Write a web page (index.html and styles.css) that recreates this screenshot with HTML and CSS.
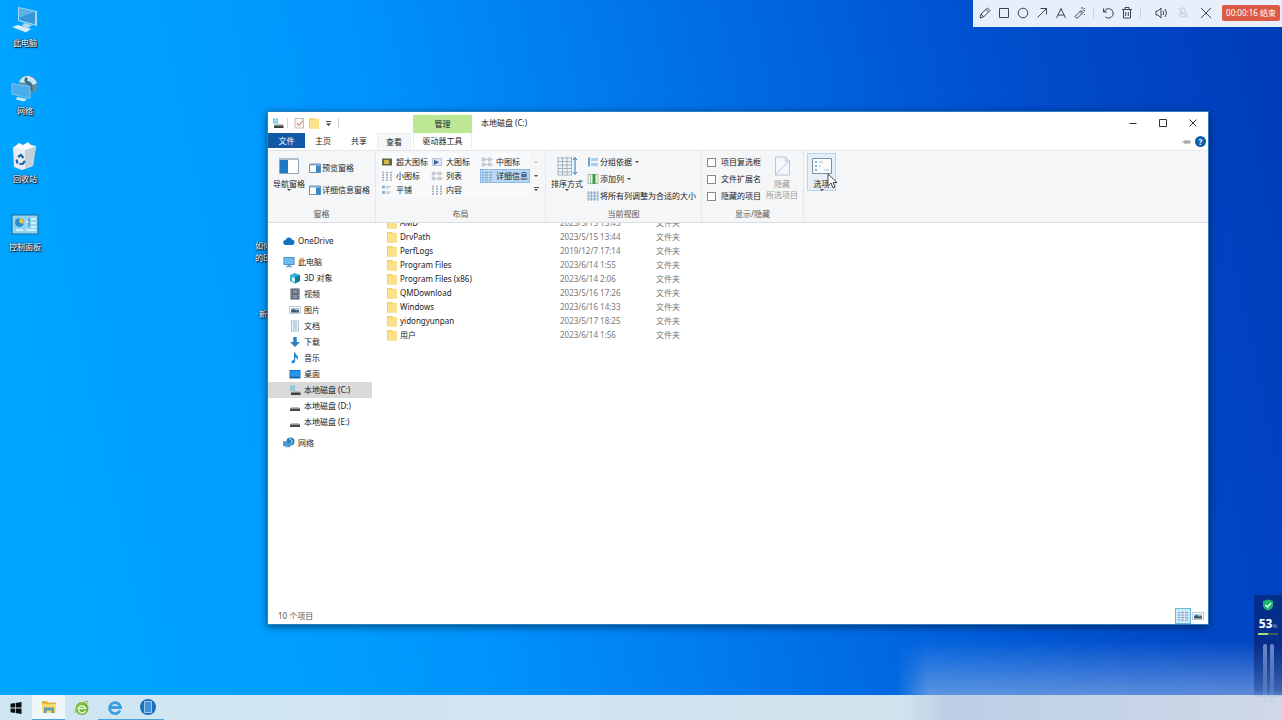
FILE: index.html
```html
<!DOCTYPE html>
<html lang="zh-CN">
<head>
  <meta charset="UTF-8" />
  <meta name="viewport" content="width=device-width, initial-scale=1" />
  <title>本地磁盘 (C:)</title>
  <link rel="stylesheet" href="styles.css">
</head>
<body>

  <!-- shared icons -->
  <svg class="sprite" aria-hidden="true">
    <symbol id="i-folder" viewBox="0 0 12 12">
      <path d="M1 1h5l1 1h4v9.500H1z" fill="#f2cf6b"/>
      <path d="M2 2.500h9v9H2z" fill="#fde08a"/>
    </symbol>
    <symbol id="i-drive" viewBox="0 0 12 12">
      <path d="M2.500 7h7l1.500 1.500H1z" fill="#b9bcbf"/>
      <path d="M1 8.500h10V11H1z" fill="#45494d"/>
    </symbol>
    <symbol id="i-drive-c" viewBox="0 0 12 12">
      <path d="M1 1.500h2.300v2.200H1zM3.800 1.500h2.300v2.200H3.800zM1 4.200h2.300v2.200H1zM3.800 4.200h2.300v2.200H3.800z" fill="#6fc4dd"/>
      <path d="M3 7h7l1.500 1.500H2z" fill="#b9bcbf"/>
      <path d="M2 8.500h9.500V11H2z" fill="#3b4146"/>
    </symbol>
    <symbol id="i-pc" viewBox="0 0 12 12">
      <path d="M.5 1h11v8H.5z" fill="#3b86bd"/>
      <path d="M1.300 1.800h9.400v6.400H1.300z" fill="#6dbbf0"/>
      <path d="M4.500 9h3v1.300h2v.9h-7v-.9h2z" fill="#6fa3c4"/>
    </symbol>
    <symbol id="i-net" viewBox="0 0 12 12">
      <circle cx="7.500" cy="4.500" r="4" fill="#2f7fb5"/>
      <path d="M6 1.500q3 1 3 3t-1.500 3" stroke="#bfe6f5" fill="none"/>
      <path d="M.5 4.500l6.500.8v4.500L.5 8.800z" fill="#3f9bdc" stroke="#2371ad" stroke-width=".5"/>
      <path d="M2 10l4 .6v.9l-4-.7z" fill="#b9d8e8"/>
    </symbol>
    <symbol id="i-pane" viewBox="0 0 12 12">
      <path d="M.5 2h11v8.500H.5z" fill="#fff" stroke="#6b8fae"/>
      <path d="M.5 2h11v1.500H.5z" fill="#7ba7cc"/>
      <path d="M7 3.500h4.500v7H7z" fill="#3b86c8"/>
    </symbol>
    <symbol id="i-grid" viewBox="0 0 12 12">
      <path d="M1 2h3v3H1zM7 2h3v3H7zM1 7h3v3H1zM7 7h3v3H7z" fill="#d3d8de" stroke="#a3acb6" stroke-width=".5"/>
      <path d="M4.800 3.500h1.500M4.800 8.500h1.500M10.500 3.500h1M10.500 8.500h1" stroke="#a3acb6"/>
    </symbol>
    <symbol id="i-small" viewBox="0 0 12 12">
      <path d="M1 2.500h2M5 2.500h2M9 2.500h2M1 5h2M5 5h2M9 5h2M1 7.500h2M5 7.500h2M9 7.500h2M1 10h2M5 10h2M9 10h2" stroke="#a3acb6" stroke-width="1.500"/>
    </symbol>
    <symbol id="i-lines" viewBox="0 0 12 12">
      <path d="M1 2.500h2M1 5h2M1 7.500h2M1 10h2" stroke="#5f9bd1"/>
      <path d="M4 2.500h3M8 2.500h3M4 5h3M8 5h3M4 7.500h3M8 7.500h3M4 10h3M8 10h3" stroke="#8e99a6"/>
    </symbol>
    <symbol id="i-tiles" viewBox="0 0 12 12">
      <path d="M1 1.500h3v3H1zM1 7h3v3H1z" fill="#8fb4d2"/>
      <path d="M5 2.500h5M5 4h3M5 8h5M5 9.500h3" stroke="#a3acb6" stroke-width=".8"/>
    </symbol>
    <symbol id="i-photo" viewBox="0 0 12 12">
      <path d="M.5 2.500h11v7H.5z" fill="#fff" stroke="#a5b1bd" stroke-width=".7"/>
      <path d="M2 4h8v4.500H2z" fill="#9fc8e6"/>
      <path d="M2 8.500V6l3-1 2 1.500 3-.5v2.500z" fill="#40586b"/>
    </symbol>
    <symbol id="i-doc" viewBox="0 0 12 12">
      <path d="M2.500.8h7v10.400h-7z" fill="#f4f9fc" stroke="#8ba3b5" stroke-width=".7"/>
      <path d="M4 3h4M4 5h4M4 7h4M4 9h4" stroke="#6c9dbd" stroke-width=".8"/>
    </symbol>
    <symbol id="i-table" viewBox="0 0 12 12">
      <path d="M1 1h10v10H1z" fill="#edf3f8"/>
      <path d="M1 1v10M4.300 1v10M7.600 1v10M11 1v10M1 3h10M1 6h10M1 9h10" stroke="#7d9cb5" stroke-width=".8"/>
    </symbol>
  </svg>

  <main class="desktop">
    <nav class="shortcuts" aria-label="桌面">
      <a class="shortcut" href="#">
        <svg viewBox="0 0 28 28"><path d="M7 1l19 4v15L7 15z" fill="#a9d8f2"/><path d="M8 2.300l16 3.500v12.500L8 14z" fill="#3596da"/><path d="M8 2.300l16 3.500L8 12z" fill="#5cb2e8"/><path d="M13 17l8 2-4 3-6-2z" fill="#b8d6e6"/><path d="M1 21l6-2 13 4-5 3.500z" fill="#d9ebf4"/></svg>
        <span>此电脑</span>
      </a>
      <a class="shortcut" href="#">
        <svg viewBox="0 0 28 28"><circle cx="17" cy="11" r="9.500" fill="#5c8ea8"/><path d="M8 8q3-7 10-6 6 2 8 7l-4 2q-1-3-4-4-4 0-4 2z" fill="#c9ebf7"/><path d="M16 4q-3 3 1 5t3 8" stroke="#3d6d8c" stroke-width="3" fill="none"/><path d="M1 9.500l18 3v12L1 20z" fill="#4badea" stroke="#7cc4ee"/><path d="M6 23l10 2-3 2.500-8-2z" fill="#cfeaf6"/></svg>
        <span>网络</span>
      </a>
      <a class="shortcut" href="#">
        <svg viewBox="0 0 28 28"><path d="M2 5l23-1-3 20-11 4-8-3z" fill="#e7edf2"/><path d="M14 8l11-4-3 20-8 3z" fill="#c3d0da"/><path d="M3 5l5-4 4 2 5-3 3 3 5 1-11 4z" fill="#fafcfd"/><path d="M7 15l3-2 2.500 3M14 19l-2.500 3h-3M5.500 17.500l1 4" stroke="#1c66aa" stroke-width="2.200" fill="none"/></svg>
        <span>回收站</span>
      </a>
      <a class="shortcut" href="#">
        <svg viewBox="0 0 28 28"><path d="M1 5h26v19H1z" fill="#8ed4f3" stroke="#1b6a9c"/><circle cx="8.500" cy="12.500" r="4.500" fill="#2b8fc4"/><path d="M8.500 12.500V8a4.500 4.500 0 0 1 4 6z" fill="#f6c64a"/><path d="M5 20h7M15 12h3M20 9h5M20 13h5M20 17h5M15 20h10" stroke="#e9f8ff" stroke-width="1.500"/><path d="M18 8v9" stroke="#287eb0"/></svg>
        <span>控制面板</span>
      </a>
    </nav>

    <div class="covered">
      <span>如何</span>
      <span>的BD</span>
      <span>新建</span>
    </div>

    <div class="haze"></div>

    <section class="window">
      <header class="titlebar">
        <div class="quick">
          <svg class="icon"><use href="#i-drive-c"/></svg>
          <i class="bar"></i>
          <button type="button" aria-label="属性"><svg class="icon" viewBox="0 0 12 12"><path d="M2 1.500h8.500v9.500H2z" fill="#fbf7f5" stroke="#b9a6a0" stroke-width=".8"/><path d="M4 6l2 2.500L9.500 4" stroke="#d0614f" fill="none"/></svg></button>
          <button type="button" aria-label="新建文件夹"><svg class="icon"><use href="#i-folder"/></svg></button>
          <button type="button" aria-label="自定义快速访问工具栏"><svg class="icon" viewBox="0 0 12 12"><path d="M3 4.500h5" stroke="#444"/><path d="M3 6.500h5L5.500 9z" fill="#333"/></svg></button>
          <i class="bar"></i>
        </div>
        <span class="context">管理</span>
        <h1 class="caption">本地磁盘 (C:)</h1>
        <div class="controls">
          <button type="button" aria-label="最小化"><svg viewBox="0 0 10 10"><path d="M1.500 5.500h7"/></svg></button>
          <button type="button" aria-label="最大化"><svg viewBox="0 0 10 10"><path d="M1.500 1.500h7v7h-7z"/></svg></button>
          <button type="button" aria-label="关闭"><svg viewBox="0 0 10 10"><path d="M1.500 1.500l7 7M8.500 1.500l-7 7"/></svg></button>
        </div>
      </header>

      <div class="tabs">
        <button type="button" class="tab file">文件</button>
        <button type="button" class="tab">主页</button>
        <button type="button" class="tab">共享</button>
        <button type="button" class="tab active">查看</button>
        <button type="button" class="tab tools">驱动器工具</button>
        <div class="tabs-end">
          <button type="button" aria-label="折叠功能区"><svg class="icon" viewBox="0 0 12 12"><path d="M2 6h3M5 4v4M5 5h5v2H5" stroke="#999" fill="#bbb"/></svg></button>
          <button type="button" class="help" aria-label="帮助">?</button>
        </div>
      </div>

      <div class="ribbon">
        <section class="group panes">
          <div class="group-body">
            <button type="button" class="big">
              <svg viewBox="0 0 22 20"><path d="M1.500 2.500h19v15h-19z" fill="#fff" stroke="#8ea4b8"/><path d="M1 2h20v2H1z" fill="#aebfce"/><path d="M2 4h8v13H2z" fill="#1f78c8"/></svg>
              <span>导航窗格</span>
              <i class="arrow"></i>
            </button>
            <div class="stack wide">
              <button type="button" class="small"><svg class="icon"><use href="#i-pane"/></svg>预览窗格</button>
              <button type="button" class="small"><svg class="icon"><use href="#i-pane"/></svg>详细信息窗格</button>
            </div>
          </div>
          <h2>窗格</h2>
        </section>

        <section class="group layout">
          <div class="group-body">
            <div class="gallery">
              <button type="button"><svg class="icon" viewBox="0 0 12 12"><path d="M1 2.500h10v7H1z" fill="#5a6b45"/><path d="M3 4h5v4H3z" fill="#d6b94c"/></svg>超大图标</button>
              <button type="button"><svg class="icon" viewBox="0 0 12 12"><path d="M1.500 2.500h9v7h-9z" fill="#dce9f4" stroke="#93a5b5" stroke-width=".6"/><path d="M3 4l5 2-5 3z" fill="#265f9c"/></svg>大图标</button>
              <button type="button"><svg class="icon"><use href="#i-grid"/></svg>中图标</button>
              <button type="button"><svg class="icon"><use href="#i-small"/></svg>小图标</button>
              <button type="button"><svg class="icon"><use href="#i-grid"/></svg>列表</button>
              <button type="button" class="selected"><svg class="icon"><use href="#i-lines"/></svg>详细信息</button>
              <button type="button"><svg class="icon"><use href="#i-tiles"/></svg>平铺</button>
              <button type="button"><svg class="icon"><use href="#i-small"/></svg>内容</button>
            </div>
            <div class="spinner">
              <button type="button" class="off" aria-label="上一行"><i class="arrow up"></i></button>
              <button type="button" aria-label="下一行"><i class="arrow"></i></button>
              <button type="button" aria-label="更多"><i class="arrow more"></i></button>
            </div>
          </div>
          <h2>布局</h2>
        </section>

        <section class="group view">
          <div class="group-body">
            <button type="button" class="big">
              <svg viewBox="0 0 22 20"><path d="M2 1h14v18H2z" fill="#f3f6f9"/><path d="M2 1v18M6.500 1v18M11 1v18M15.500 1v18M2 2h14M2 5.500h14M2 9h14M2 12.500h14M2 16h14M2 19h14" stroke="#a2b2c0"/><path d="M19 2v15M17 4l2-2.500L21 4M17 16l2 2.500 2-2.500" stroke="#2b74b5" fill="none"/></svg>
              <span>排序方式</span>
              <i class="arrow"></i>
            </button>
            <div class="stack">
              <button type="button" class="small"><svg class="icon" viewBox="0 0 12 12"><path d="M1 1.500h2v9H1z" fill="#5ea9dc"/><path d="M4 2h7v3H4zM4 7h7v3H4z" fill="#a9d1ee"/></svg>分组依据<i class="arrow"></i></button>
              <button type="button" class="small"><svg class="icon" viewBox="0 0 12 12"><path d="M1 1.500h10v9H1z" fill="#eef5ee" stroke="#8fae94" stroke-width=".7"/><path d="M5.500 1h3v10h-3z" fill="#3b9e4a"/><path d="M3.500 1v10" stroke="#8fae94" stroke-width=".7"/></svg>添加列<i class="arrow"></i></button>
              <button type="button" class="small"><svg class="icon"><use href="#i-table"/></svg>将所有列调整为合适的大小</button>
            </div>
          </div>
          <h2>当前视图</h2>
        </section>

        <section class="group show">
          <div class="group-body">
            <div class="stack">
              <label class="check"><input type="checkbox">项目复选框</label>
              <label class="check"><input type="checkbox">文件扩展名</label>
              <label class="check"><input type="checkbox">隐藏的项目</label>
            </div>
            <button type="button" class="big faded" disabled>
              <svg viewBox="0 0 22 20"><path d="M4.500 1h10l4 4v14h-14z" fill="#f4f7fb" stroke="#b8c6d6"/><path d="M14.500 1v4h4M5 18L18 5" stroke="#b8c6d6" fill="none"/></svg>
              <span>隐藏<br>所选项目</span>
            </button>
          </div>
          <h2>显示/隐藏</h2>
        </section>

        <section class="group options">
          <div class="group-body">
            <button type="button" class="big hover">
              <svg viewBox="0 0 22 20"><path d="M1.500 2.500h19v15h-19z" fill="#fbfcfd" stroke="#7f8d9a"/><path d="M4 6h2M4 10h2M4 14h2" stroke="#5594c8" stroke-width="1.500"/><path d="M8 6h4M8 10h2M13 14h5" stroke="#b4bec8"/></svg>
              <span>选项</span>
              <i class="arrow"></i>
            </button>
            <svg class="cursor" viewBox="0 0 11 16"><path d="M1 1v12l3-3 2 5 2-1-2-4.500h4z" fill="#fff" stroke="#333" stroke-width=".9"/></svg>
          </div>
        </section>
      </div>

      <div class="content">
        <nav class="tree" aria-label="导航窗格">
          <a href="#" class="root"><svg class="icon" viewBox="0 0 12 12"><path d="M3 10a2.500 2.500 0 0 1-.5-5A3.500 3.500 0 0 1 9 4.500 2.800 2.800 0 0 1 9.500 10z" fill="#1473c4"/></svg>OneDrive</a>
          <a href="#" class="root"><svg class="icon"><use href="#i-pc"/></svg>此电脑</a>
          <a href="#"><svg class="icon" viewBox="0 0 12 12"><path d="M6 1l5 2v6l-5 2.500L1 9V3z" fill="#31b5d8"/><path d="M6 5l5-2v6l-5 2.500z" fill="#15799f"/><path d="M3 5l3 1v4L3 9z" fill="#d6f4fb"/></svg>3D 对象</a>
          <a href="#"><svg class="icon" viewBox="0 0 12 12"><path d="M1.500.5h9v11h-9z" fill="#4b4f5c"/><path d="M3.500 1.500h5v4h-5zM3.500 6.500h5v4h-5z" fill="#8492a6"/><path d="M2.400 1v10M9.600 1v10" stroke="#ddd" stroke-width=".7" stroke-dasharray="1 1"/></svg>视频</a>
          <a href="#"><svg class="icon"><use href="#i-photo"/></svg>图片</a>
          <a href="#"><svg class="icon"><use href="#i-doc"/></svg>文档</a>
          <a href="#"><svg class="icon" viewBox="0 0 12 12"><path d="M4.300 1h3.400v5h3.300l-5 5-5-5h3.300z" fill="#2a80c8"/></svg>下载</a>
          <a href="#"><svg class="icon" viewBox="0 0 12 12"><path d="M5 .5h1.200q.3 2 2 3.200 1.800 1.800.3 4.300-.2-2-2.300-2.800v3.800q-.4 2.200-2.400 2.300T2.500 9.500Q3 8 5 8z" fill="#1f87cf"/></svg>音乐</a>
          <a href="#"><svg class="icon" viewBox="0 0 12 12"><path d="M.5 2h11v8.500H.5z" fill="#1668b0"/><path d="M1.300 2.800h9.400v5.700H1.300z" fill="#2596ea"/></svg>桌面</a>
          <a href="#" class="current"><svg class="icon"><use href="#i-drive-c"/></svg>本地磁盘 (C:)</a>
          <a href="#"><svg class="icon"><use href="#i-drive"/></svg>本地磁盘 (D:)</a>
          <a href="#"><svg class="icon"><use href="#i-drive"/></svg>本地磁盘 (E:)</a>
          <a href="#" class="root"><svg class="icon"><use href="#i-net"/></svg>网络</a>
        </nav>

        <div class="files">
          <table>
            <tbody>
              <tr><td><svg class="icon"><use href="#i-folder"/></svg>AMD</td><td>2023/5/15 13:43</td><td>文件夹</td></tr>
              <tr><td><svg class="icon"><use href="#i-folder"/></svg>DrvPath</td><td>2023/5/15 13:44</td><td>文件夹</td></tr>
              <tr><td><svg class="icon"><use href="#i-folder"/></svg>PerfLogs</td><td>2019/12/7 17:14</td><td>文件夹</td></tr>
              <tr><td><svg class="icon"><use href="#i-folder"/></svg>Program Files</td><td>2023/6/14 1:55</td><td>文件夹</td></tr>
              <tr><td><svg class="icon"><use href="#i-folder"/></svg>Program Files (x86)</td><td>2023/6/14 2:06</td><td>文件夹</td></tr>
              <tr><td><svg class="icon"><use href="#i-folder"/></svg>QMDownload</td><td>2023/5/16 17:26</td><td>文件夹</td></tr>
              <tr><td><svg class="icon"><use href="#i-folder"/></svg>Windows</td><td>2023/6/16 14:33</td><td>文件夹</td></tr>
              <tr><td><svg class="icon"><use href="#i-folder"/></svg>yidongyunpan</td><td>2023/5/17 18:25</td><td>文件夹</td></tr>
              <tr><td><svg class="icon"><use href="#i-folder"/></svg>用户</td><td>2023/6/14 1:56</td><td>文件夹</td></tr>
            </tbody>
          </table>
        </div>
      </div>

      <footer class="status">
        <span>10 个项目</span>
        <button type="button" class="on" aria-label="详细信息"><svg class="icon"><use href="#i-lines"/></svg></button>
        <button type="button" aria-label="大图标"><svg class="icon"><use href="#i-photo"/></svg></button>
      </footer>
    </section>

    <div class="recorder">
      <button type="button" aria-label="画笔"><svg viewBox="0 0 14 14"><path d="M2 12l1-4 6.500-6 2.500 2.500L5.500 11zM8 3.500L10.500 6M3 8l2.500 3"/></svg></button>
      <button type="button" aria-label="矩形"><svg viewBox="0 0 14 14"><path d="M2.500 2.500h9v9h-9z"/></svg></button>
      <button type="button" aria-label="椭圆"><svg viewBox="0 0 14 14"><circle cx="7" cy="7" r="4.800"/></svg></button>
      <button type="button" aria-label="箭头"><svg viewBox="0 0 14 14"><path d="M2.500 11.500l9-9M5.500 2.500h6v6"/></svg></button>
      <button type="button" aria-label="文字"><svg viewBox="0 0 14 14"><path d="M2.500 12L7 2.500l4.500 9.500M4 9h6"/></svg></button>
      <button type="button" aria-label="荧光笔"><svg viewBox="0 0 14 14"><path d="M2 10.500l6-6 2 2-6 6zM7 5.500l2 2M9 1v2M12 4.500h-1.500M12 2l-1.500 1.200M11 8l.5 1"/></svg></button>
      <i class="bar"></i>
      <button type="button" aria-label="撤销"><svg viewBox="0 0 14 14"><path d="M2.500 2.500v3.500H6M3 6a4.700 4.700 0 1 1 1.500 5"/></svg></button>
      <button type="button" aria-label="清空"><svg viewBox="0 0 14 14"><path d="M2 3.500h10M5 3V1.500h4V3M3.500 4v8h7V4M5.700 6v4M8.300 6v4"/></svg></button>
      <i class="bar"></i>
      <button type="button" class="sound" aria-label="声音"><svg viewBox="0 0 14 14"><path d="M2 5h2l3-3v10L4 9H2zM9 5q1.500 2 0 4M11 3q3 4 0 8"/></svg></button>
      <button type="button" class="muted" aria-label="麦克风"><svg viewBox="0 0 14 14"><path d="M5 2h4v6H5zM3 7q0 4 4 4t4-4M2 2l10 10"/></svg></button>
      <button type="button" aria-label="关闭"><svg viewBox="0 0 14 14"><path d="M2 2l10 10M12 2L2 12"/></svg></button>
      <button type="button" class="stop">00:00:16 结束</button>
    </div>
  </main>

  <footer class="taskbar">
    <button type="button" class="start" aria-label="开始"><svg viewBox="0 0 18 18"><path d="M3.500 4.700L8 4v4.600H3.500zM8.700 3.900l5.800-.9v5.600H8.700zM3.500 9.400H8V14l-4.500-.7zM8.700 9.400h5.800V15l-5.800-.9z" fill="#0b0d10"/></svg></button>
    <button type="button" class="front" aria-label="文件资源管理器"><svg viewBox="0 0 18 18"><path d="M2 3h5l1 1.500h8V15H2z" fill="#e8b33b"/><path d="M2 6h14v9H2z" fill="#fbd86b"/><path d="M4 9.500h10V15h-2.500v-2.500h-5V15H4z" fill="#5f9bae"/></svg></button>
    <button type="button" aria-label="360浏览器"><svg viewBox="0 0 18 18"><circle cx="9" cy="9.500" r="6.500" fill="#6cb52f"/><path d="M12.500 11.500A3.600 3.600 0 1 1 12.600 9.500H6" fill="none" stroke="#e8f6da" stroke-width="1.500"/><path d="M2 14Q3 6 12.500 2.500q3-.8 2 2" fill="none" stroke="#9ad04a" stroke-width="1.300"/></svg></button>
    <button type="button" class="open" aria-label="浏览器"><svg viewBox="0 0 18 18"><path d="M14 12.500A5.500 5.500 0 1 1 14.500 9.500H5" fill="none" stroke="#3a9fe0" stroke-width="2.800"/></svg></button>
    <button type="button" class="open" aria-label="手机助手"><svg viewBox="0 0 18 18"><circle cx="9" cy="9" r="8" fill="#1b6dbd"/><path d="M5.500 3.500h7v11h-7z" fill="#3f93dc" stroke="#a9d0f0" stroke-width=".9"/></svg></button>
  </footer>

  <aside class="monitor">
    <svg class="shield" viewBox="0 0 12 12"><path d="M6 .5l5 1.500v4q0 4-5 5.500Q1 10 1 6V2z" fill="#1cb673"/><path d="M3.500 6l2 2 3.500-4" stroke="#fff" fill="none" stroke-width="1.300"/></svg>
    <strong>53<small>%</small></strong>
    <i class="meter"></i>
    <div class="levels"><i></i><i></i></div>
  </aside>

</body>
</html>
```
FILE: styles.css
```css
* {
  box-sizing: border-box;
}
body {
  margin: 0;
  height: 100vh;
  display: flex;
  flex-direction: column;
  overflow: hidden;
  position: relative;
  font-family: "Noto Sans", "Noto Sans CJK SC", sans-serif;
  font-size: 8px;
  line-height: 12px;
  color: #222;
  background: linear-gradient(78deg, #00a6ff 0%, #009fff 22%, #0092fc 36%, #007ff0 48%, #0066e0 64%, #004ecd 80%, #0042c0 92%, #003cb8 100%);
}
button {
  font: inherit;
  color: inherit;
  background: none;
  border: none;
  padding: 0;
  white-space: nowrap;
}
a {
  color: inherit;
  text-decoration: none;
}
svg {
  display: block;
  flex: none;
}
h1, h2 {
  margin: 0;
  font-size: 8px;
  font-weight: normal;
}
.sprite {
  position: absolute;
  width: 0;
  height: 0;
}
.icon {
  width: 12px;
  height: 12px;
}
.bar {
  width: 1px;
  height: 10px;
  background: #cfd2d8;
}
.arrow {
  border: 2px solid transparent;
  border-top-color: #444;
  border-bottom: none;
}
.arrow.up {
  border-top: none;
  border-bottom: 2px solid #444;
}

/* desktop */
.desktop {
  flex: 1;
  position: relative;
  min-height: 0;
}
.shortcuts {
  display: flex;
  flex-direction: column;
  align-items: flex-start;
  gap: 25px;
  padding: 6px 5px;
}
.shortcut {
  display: flex;
  flex-direction: column;
  align-items: center;
  gap: 3px;
  width: 40px;
  color: #fff;
  text-shadow: 0 0 2px #000, 1px 1px 1px #000;
}
.shortcut svg {
  width: 28px;
  height: 28px;
}
.covered {
  position: absolute;
  left: 255px;
  top: 240px;
  display: flex;
  flex-direction: column;
  color: #fff;
  text-shadow: 0 0 2px #000, 1px 1px 1px #000;
}
.covered span:last-child {
  margin-top: 44px;
  padding-left: 4px;
}
.haze {
  position: absolute;
  left: 896px;
  right: 0;
  top: 640px;
  bottom: 0;
  background: linear-gradient(rgba(140, 175, 225, 0), rgba(140, 175, 225, 0.65));
  mask-image: linear-gradient(90deg, transparent, #000 32px);
}

/* explorer window */
.window {
  position: absolute;
  left: 267px;
  right: 73px;
  top: 111px;
  bottom: 70px;
  display: flex;
  flex-direction: column;
  background: #fff;
  border: 1px solid #2a7fc4;
  box-shadow: 0 2px 8px rgba(0, 0, 0, 0.5);
}
.titlebar {
  display: flex;
  align-items: center;
  height: 21px;
}
.quick {
  display: flex;
  align-items: center;
  gap: 3px;
  width: 145px;
  padding-left: 4px;
}
.quick .bar + button {
  margin-left: 2px;
}
.context {
  align-self: flex-end;
  width: 59px;
  height: 18px;
  line-height: 18px;
  text-align: center;
  background: #bde695;
}
.caption {
  flex: 1;
  padding-left: 9px;
}
.controls {
  display: flex;
}
.controls button {
  width: 30px;
  display: flex;
  justify-content: center;
}
.controls svg {
  width: 10px;
  height: 10px;
  fill: none;
  stroke: #333;
}
.tabs {
  display: flex;
  height: 17px;
}
.tab {
  width: 36px;
  height: 16px;
}
.tab.file {
  width: 37px;
  height: 15px;
  background: #1359a8;
  color: #fff;
}
.tab.active {
  width: 34px;
  height: 17px;
  background: #f5f6f7;
  border: 1px solid #eceef0;
  border-bottom: none;
}
.tab.tools {
  width: 59px;
  margin-left: 2px;
  border: 1px solid #ececec;
  border-top: none;
  border-bottom: none;
}
.tabs-end {
  margin-left: auto;
  display: flex;
  align-items: center;
  gap: 3px;
  padding-right: 2px;
}
.help {
  width: 11px;
  height: 11px;
  line-height: 11px;
  border-radius: 50%;
  background: #0f5fa8;
  color: #fff;
  font-weight: bold;
}

/* ribbon */
.ribbon {
  display: flex;
  height: 73px;
  background: #f5f6f7;
  border-top: 1px solid #e4e6e8;
  border-bottom: 1px solid #dcdfe2;
}
.group {
  display: flex;
  flex-direction: column;
  justify-content: space-between;
  padding: 2px 5px;
  border-right: 1px solid #e6e8eb;
}
.group h2 {
  text-align: center;
  color: #555;
}
.group-body {
  display: flex;
  position: relative;
}
.group.layout {
  padding-left: 4px;
  padding-right: 4px;
}
.group.options {
  border-right: none;
  padding-left: 3px;
}
.big {
  display: flex;
  flex-direction: column;
  align-items: center;
  padding-top: 3px;
  line-height: 11px;
}
.big svg {
  width: 22px;
  height: 20px;
  margin-bottom: 2px;
}
.big.hover {
  width: 29px;
  height: 38px;
  padding-top: 2px;
  background: #e6f0f9;
  border: 1px solid #b9d5ec;
}
.big.faded {
  color: #999;
  padding-left: 5px;
}
.stack {
  display: flex;
  flex-direction: column;
  gap: 5px;
  padding: 3px 0 0 4px;
}
.stack.wide {
  gap: 10px;
  padding-top: 9px;
}
.small {
  display: flex;
  align-items: center;
  gap: 1px;
}
.small .arrow {
  margin-left: 2px;
}
.check {
  display: flex;
  align-items: center;
  gap: 5px;
}
.check input {
  appearance: none;
  width: 9px;
  height: 9px;
  margin: 0;
  border: 1px solid #8a8a8a;
  background: #fff;
}
.group.show .stack {
  padding-left: 0;
}
.gallery {
  display: grid;
  grid-template-columns: repeat(3, 50px);
  grid-auto-rows: 14px;
  padding-top: 2px;
  background: #f9fafb;
}
.gallery button {
  display: flex;
  align-items: center;
  gap: 3px;
  padding-left: 1px;
}
.gallery .selected {
  background: #b9d8f6;
  outline: 1px solid #8db8e0;
  outline-offset: -1px;
}
.spinner {
  display: grid;
  grid-template-rows: repeat(3, 14px);
  width: 11px;
  padding-top: 2px;
}
.spinner button {
  display: flex;
  align-items: center;
  justify-content: center;
}
.spinner .off {
  opacity: 0.3;
}
.arrow.more {
  position: relative;
}
.arrow.more::before {
  content: "";
  position: absolute;
  left: -2px;
  top: -4px;
  width: 5px;
  height: 1px;
  background: #555;
}
.cursor {
  position: absolute;
  left: 20px;
  top: 20px;
  width: 11px;
  height: 16px;
}

/* tree and file list */
.content {
  flex: 1;
  min-height: 0;
  display: flex;
  overflow: hidden;
}
.tree {
  width: 104px;
  padding-top: 10px;
}
.tree a {
  display: flex;
  align-items: center;
  gap: 3px;
  height: 16px;
  padding-left: 21px;
}
.tree .root {
  padding-left: 15px;
}
.tree a + .root {
  margin-top: 5px;
}
.tree .current {
  background: #d9d9d9;
}
.files {
  flex: 1;
  padding-left: 14px;
}
table {
  border-collapse: collapse;
  margin-top: -7px;
}
td {
  height: 14px;
  padding: 0;
  color: #777;
}
td:first-child {
  display: flex;
  align-items: center;
  gap: 2px;
  width: 174px;
  color: #222;
}
td:nth-child(2) {
  width: 96px;
}
.status {
  display: flex;
  align-items: center;
  height: 17px;
  padding: 0 3px 0 10px;
  color: #555;
}
.status span {
  flex: 1;
}
.status button {
  padding: 1px;
}
.status .on {
  background: #cde8f7;
  border: 1px solid #6fb7de;
}

/* recording toolbar */
.recorder {
  position: absolute;
  top: 0;
  right: 0;
  display: flex;
  align-items: center;
  height: 27px;
  padding: 0 2px 1px;
  background: #e9eefb;
}
.recorder button {
  width: 19px;
  display: flex;
  justify-content: center;
}
.recorder svg {
  width: 14px;
  height: 14px;
  fill: none;
  stroke: #3d4250;
}
.recorder .bar {
  margin: 0 4px;
}
.recorder .sound {
  margin-left: 6px;
}
.recorder .muted {
  width: 26px;
  opacity: 0.2;
}
.recorder .stop {
  width: 58px;
  height: 16px;
  line-height: 16px;
  margin-left: 7px;
  border-radius: 2px;
  background: #dc5a46;
  color: #fff;
}

/* taskbar */
.taskbar {
  display: flex;
  height: 25px;
  background: linear-gradient(90deg, #cfe6f3, #d3e3ee 70%, #bccfe6 74%, #cfd8e8);
}
.taskbar button {
  display: flex;
  align-items: center;
  justify-content: center;
  width: 33px;
}
.taskbar .start {
  width: 32px;
}
.taskbar svg {
  width: 18px;
  height: 18px;
}
.taskbar .front {
  background: #eef7fb;
}
.taskbar .front,
.taskbar .open {
  border-bottom: 1px solid #4aa3df;
}

/* system monitor */
.monitor {
  position: absolute;
  right: 0;
  bottom: 0;
  width: 28px;
  height: 125px;
  display: flex;
  flex-direction: column;
  align-items: center;
  padding-top: 4px;
  color: #fff;
  background: linear-gradient(rgba(8, 30, 100, 0.6) 40%, rgba(8, 30, 100, 0.3) 76%, transparent 82%);
}
.monitor .shield {
  width: 12px;
  height: 12px;
}
.monitor strong {
  margin-top: 6px;
  font-size: 12px;
  line-height: 14px;
}
.monitor small {
  font-size: 6px;
  font-weight: normal;
  color: #9db2e0;
}
.meter {
  width: 20px;
  height: 2px;
  background: linear-gradient(90deg, #a7dc7d 50%, #4a5a5f 50%);
}
.levels {
  display: flex;
  gap: 3px;
  margin-top: 9px;
}
.levels i {
  width: 4px;
  height: 60px;
  border-radius: 2px;
  background: linear-gradient(rgba(170, 195, 240, 0.6), rgba(170, 195, 240, 0.1));
}
```
